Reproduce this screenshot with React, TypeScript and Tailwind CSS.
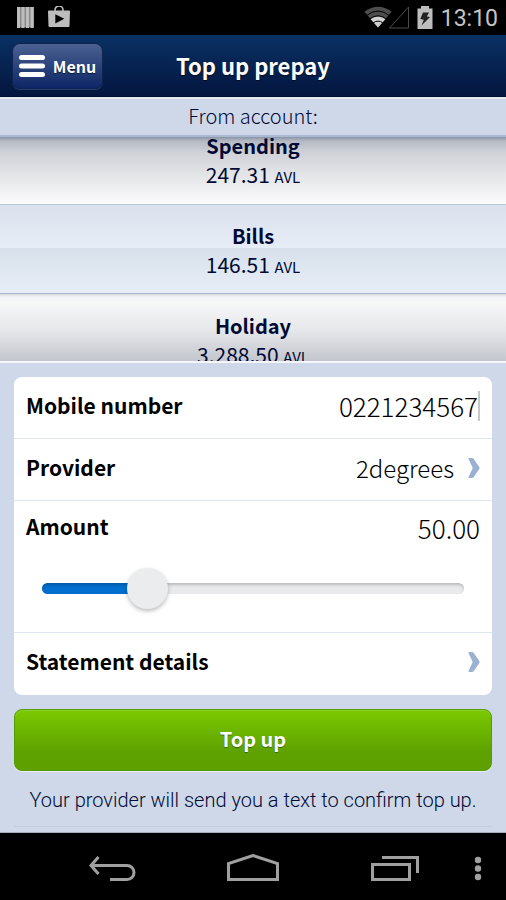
import { useState } from "react";

const ACCOUNTS = [
  {
    name: "Spending",
    balance: "247.31",
    style: "bg-[linear-gradient(#8b94a6_23px,#b4b9c3_27px,#cfd1d7_38px,#e3e4e7_60px,#fbfbfc_90px)]",
  },
  {
    name: "Bills",
    balance: "146.51",
    style:
      "border-y border-t-[#b9c8dd] border-b-[#a3b4cc] bg-[linear-gradient(#d9e1ed,#e7edf6_43px,#d7e0eb_43px,#e8eef6)]",
  },
  {
    name: "Holiday",
    balance: "3,288.50",
    style: "bg-[linear-gradient(#d9dbde,#f2f3f4_3px,#f8f8f9_8px,#e6e7ea_36px,#c3c6ce_67px)]",
  },
];

const MIN_AMOUNT = 10;
const MAX_AMOUNT = 190;

function Chevron() {
  return (
    <svg width="12" height="20" viewBox="0 0 12 20" fill="#9bb1d3" aria-hidden="true">
      <path d="M1.200 0H4Q5 0 5.600.8L11.300 9.100Q11.900 10 11.300 10.900L5.600 19.200Q5 20 4 20H1.200Q0 20 .5 18.900L4.300 11Q4.800 10 4.300 9L.5 1.100Q0 0 1.200 0Z" />
    </svg>
  );
}

function StatusBar() {
  return (
    <div className="flex h-[35px] items-center justify-between bg-black pl-4 pr-2 text-[#c4c4c4]">
      <div className="flex items-center gap-3">
        <svg width="20" height="24" viewBox="0 0 20 24" aria-hidden="true">
          <path d="M1 1H18V21.5H1Z" fill="#8a8a8a" />
          <path d="M1 1H4V22H1ZM5.5 1H8.5V22H5.5ZM10 1H13V22H10ZM14.5 1H17.5V22H14.5Z" fill="#bdbdbd" />
        </svg>
        <svg width="22" height="24" viewBox="0 0 22 24" aria-hidden="true">
          <path d="M7 5V4A4 4 0 0 1 15 4V5" fill="none" stroke="#bdbdbd" strokeWidth="1.6" />
          <path d="M0 5.5Q0 4.5 1 4.5H21Q22 4.5 22 5.5L21.5 20Q21.5 21 20.5 21H1.5Q.5 21 .5 20Z" fill="#bdbdbd" />
          <path d="M7.3 8.2L16.3 12.8L7.3 17.5Z" fill="#000" />
        </svg>
      </div>
      <div className="flex items-center">
        <svg width="45" height="24" viewBox="0 0 45 24" aria-hidden="true">
          <path d="M14 21.500L.4 5.800Q14-4.300 27.600 5.800Z" fill="#4d4d4d" />
          <path d="M14 21.500L6.500 13Q14 8 21.500 13Z" fill="#d0d0d0" />
          <path d="M2.700 9.500Q14 .5 25.300 9.500M5.600 13Q14 6.500 22.400 13M9 17Q14 13.200 19 17" fill="none" stroke="#000" strokeWidth="1" />
          <path d="M25.500 22L44.500 1V22Z" fill="none" stroke="#4a4a4a" />
        </svg>
        <svg className="ml-2" width="16" height="24" viewBox="0 0 16 24" aria-hidden="true">
          <path d="M4 0H12V2.500H15.500V23H.5V2.500H4Z" fill="#bdbdbd" />
          <path d="M6 6.500H12L9.800 10.500L13 11L4.500 19.500L6.800 13.800L3.300 13Z" fill="#222" />
        </svg>
        <span className="ml-2 pt-1 font-['Roboto',sans-serif] text-[23px]">13:10</span>
      </div>
    </div>
  );
}

function NavBar() {
  return (
    <nav className="flex h-[67px] items-center bg-black pt-1 text-[#a0a0a0]">
      <div className="flex flex-1 items-center justify-between pl-[88px] pr-[54px]">
        <button type="button" aria-label="Back">
          <svg width="48" height="30" viewBox="0 0 48 30" fill="none" stroke="currentColor" strokeWidth="3">
            <path d="M10.500 3L3 11.500L10.500 20M3 11.500H39A7 7 0 0 1 39 25.500H22" />
          </svg>
        </button>
        <button type="button" aria-label="Home">
          <svg width="54" height="30" viewBox="0 0 54 30" fill="none" stroke="currentColor" strokeWidth="3">
            <path d="M2.500 25.500V9.500L27 1.500L51.500 9.500V25.500Z" />
          </svg>
        </button>
        <button type="button" aria-label="Recent apps">
          <svg width="50" height="30" viewBox="0 0 50 30" fill="none" stroke="currentColor" strokeWidth="3">
            <path d="M2.500 10.500H39.500V25.500H2.500ZM12 3.500H47.500V19" />
          </svg>
        </button>
      </div>
      <button type="button" aria-label="More options" className="mr-6">
        <svg width="8" height="26" viewBox="0 0 8 26" fill="currentColor">
          <circle cx="4" cy="4" r="3.200" />
          <circle cx="4" cy="12.500" r="3.200" />
          <circle cx="4" cy="21" r="3.200" />
        </svg>
      </button>
    </nav>
  );
}

export default function App() {
  const [selected, setSelected] = useState("Bills");
  const [mobile, setMobile] = useState("0221234567");
  const [amount, setAmount] = useState(50);
  const filled = ((amount - MIN_AMOUNT) / (MAX_AMOUNT - MIN_AMOUNT)) * 100;

  return (
    <div className="flex min-h-screen flex-col bg-[#ced8e8] font-['Noto_Sans_CJK_SC',sans-serif] text-[#000a35]">
      <StatusBar />

      <header className="grid h-[62px] grid-cols-[1fr_auto_1fr] items-center border-b border-[#02102f] bg-linear-to-b from-[#0a3164] to-[#04163f] px-3 text-white">
        <button
          type="button"
          className="flex h-[46px] w-[91px] items-center justify-center gap-2 rounded-lg border border-[#10244f] bg-linear-to-b from-[#4b6191] to-[#0e2666] text-base font-bold shadow-[0_1px_0_#24406f] [text-shadow:0_1px_1px_#000a]"
        >
          <svg width="26" height="22" viewBox="0 0 26 22" fill="#fff" aria-hidden="true">
            <rect width="26" height="5" rx="2.500" />
            <rect y="8.500" width="26" height="5" rx="2.500" />
            <rect y="17" width="26" height="5" rx="2.500" />
          </svg>
          Menu
        </button>
        <h1 className="text-[22px] font-bold [text-shadow:0_1px_1px_#000a]">Top up prepay</h1>
      </header>

      <main className="flex flex-1 flex-col">
        <h2 className="flex h-10 items-center justify-center border-b-2 border-t-2 border-b-[#a9b9d1] border-t-[#e4eaf3] pb-0.5 text-xl font-light">
          From account:
        </h2>

        <div className="flex h-[224px] flex-col justify-center overflow-hidden">
          {ACCOUNTS.map((account) => (
            <button
              key={account.name}
              type="button"
              aria-pressed={selected === account.name}
              onClick={() => setSelected(account.name)}
              className={`h-[90px] w-full shrink-0 pt-1 text-center ${account.style}`}
            >
              <span className="block text-xl leading-7 font-bold">{account.name}</span>
              <span className="block text-[21px] leading-7">
                {account.balance} <span className="text-[15px]">AVL</span>
              </span>
            </button>
          ))}
        </div>

        <form className="border-t-2 border-[#f4f6fa] px-3.5 pt-3.5" onSubmit={(e) => e.preventDefault()}>
          <div className="divide-y divide-[#dfe6f0] overflow-hidden rounded-lg bg-white text-black">
            <div className="flex h-[62px] items-center justify-between px-3 pb-1">
              <label htmlFor="mobile" className="shrink-0 text-[21px] font-bold">
                Mobile number
              </label>
              <input
                id="mobile"
                type="tel"
                value={mobile}
                onChange={(e) => setMobile(e.target.value)}
                className="h-[30px] w-full min-w-0 border-r-2 border-[#c8c8c8] text-right text-[26px] font-light outline-none"
              />
            </div>

            <button type="button" className="flex h-[62px] w-full items-center px-3 pb-1">
              <span className="flex-1 text-left text-[21px] font-bold">Provider</span>
              <span className="mr-3.5 text-2xl font-light">2degrees</span>
              <Chevron />
            </button>

            <div className="h-[132px] pt-2">
              <div className="flex h-9 items-center justify-between px-3">
                <label htmlFor="amount" className="text-[21px] font-bold">
                  Amount
                </label>
                <output htmlFor="amount" className="text-[26px] font-light">
                  {amount.toFixed(2)}
                </output>
              </div>
              <div className="flex h-[86px] items-center px-7">
                <input
                  id="amount"
                  type="range"
                  min={MIN_AMOUNT}
                  max={MAX_AMOUNT}
                  step={10}
                  value={amount}
                  onChange={(e) => setAmount(Number(e.target.value))}
                  style={{
                    backgroundImage: `linear-gradient(90deg, #006fcf ${filled}%, #e9eaec ${filled}%)`,
                  }}
                  className="h-[11px] w-full appearance-none rounded-full shadow-[inset_0_2px_3px_#0003] [&::-webkit-slider-thumb]:size-[41px] [&::-webkit-slider-thumb]:appearance-none [&::-webkit-slider-thumb]:rounded-full [&::-webkit-slider-thumb]:bg-[#ebecee] [&::-webkit-slider-thumb]:shadow-[0_2px_4px_#0004]"
                />
              </div>
            </div>

            <button type="button" className="flex h-[62px] w-full items-center px-3 pb-1">
              <span className="flex-1 text-left text-[21px] font-bold">Statement details</span>
              <Chevron />
            </button>
          </div>

          <button
            type="submit"
            className="mt-3.5 h-[62px] w-full rounded-lg border border-[#559b06] bg-[linear-gradient(#7bc900,#5ea200_70%,#5ea000)] pb-0.5 text-xl font-bold text-white shadow-[0_1px_0_#e9eff5,inset_0_1px_0_#8bd02a] [text-shadow:0_1px_1px_#0006]"
          >
            Top up
          </button>
        </form>

        <p className="pt-[15px] pb-3 text-center font-['Roboto',sans-serif] text-xl leading-7 font-light">
          Your provider will send you a text to confirm top up.
        </p>

        <div className="flex-1 border-b border-[#a5adba] px-3.5">
          <div className="h-full rounded-t-lg border-t border-[#c0cddf]" />
        </div>
      </main>

      <NavBar />
    </div>
  );
}
